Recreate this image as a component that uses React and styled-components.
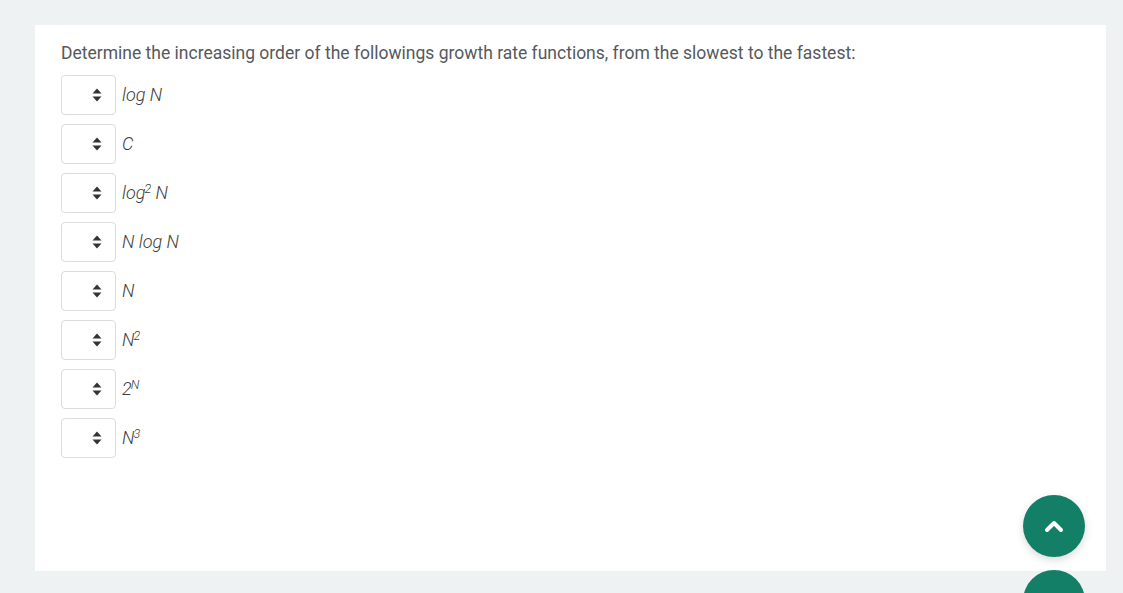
import React from 'react';
import styled, { createGlobalStyle } from 'styled-components';

const GlobalStyle = createGlobalStyle`
  body {
    margin: 0;
    background: #eef2f3;
    font-family: Roboto, "Liberation Sans", sans-serif;
    overflow: hidden;
  }
`;

const items = [
  { id: 1, label: <>log N</> },
  { id: 2, label: <>C</> },
  { id: 3, label: <>log<sup>2</sup> N</> },
  { id: 4, label: <>N log N</> },
  { id: 5, label: <>N</> },
  { id: 6, label: <>N<sup>2</sup></> },
  { id: 7, label: <>2<sup>N</sup></> },
  { id: 8, label: <>N<sup>3</sup></> },
];

const SortIcon = () => (
  <svg width="10" height="14" viewBox="0 0 10 14">
    <path d="M5 0.5 L9.5 5.5 H0.5 Z" fill="#333" />
    <path d="M5 13.5 L9.5 8.5 H0.5 Z" fill="#333" />
  </svg>
);

const App = () => {
  return (
    <Page>
      <GlobalStyle />
      <Card>
        <Question>
          Determine the increasing order of the followings growth rate functions, from the slowest to the fastest:
        </Question>
        <List>
          {items.map(({ id, label }) => (
            <Row key={id}>
              <SelectBox>
                <SortIcon />
              </SelectBox>
              <Label>{label}</Label>
            </Row>
          ))}
        </List>
      </Card>
      <TopButton>
        <svg width="20" height="14" viewBox="0 0 20 14">
          <path d="M3 11 L10 4 L17 11" fill="none" stroke="#fff" strokeWidth="4" strokeLinecap="round" strokeLinejoin="round" />
        </svg>
      </TopButton>
      <NextButton />
    </Page>
  );
};

const Page = styled.div`
  position: relative;
  height: 593px;
  padding: 25px 17px 0 35px;
  box-sizing: border-box;
  overflow: hidden;
`;

const Card = styled.div`
  background: #fff;
  height: 546px;
  padding: 16px 26px;
  box-sizing: border-box;
`;

const Question = styled.p`
  margin: 0 0 10px;
  font-size: 17.5px;
  line-height: 24px;
  color: #55595d;
`;

const List = styled.div`
  display: flex;
  flex-direction: column;
  gap: 9px;
`;

const Row = styled.div`
  display: flex;
  align-items: center;
  gap: 6px;
`;

const SelectBox = styled.div`
  width: 55px;
  height: 40px;
  box-sizing: border-box;
  border: 1px solid #dcdcdc;
  border-radius: 4px;
  display: flex;
  align-items: center;
  justify-content: flex-end;
  padding-right: 13px;
`;

const Label = styled.span`
  font-size: 18px;
  font-weight: 300;
  font-style: italic;
  color: #3a3d40;
  line-height: 40px;

  sup {
    font-size: 12.5px;
    line-height: 0;
    vertical-align: 6px;
    margin-left: -1px;
  }
`;

const TopButton = styled.div`
  position: absolute;
  left: 1023px;
  top: 495px;
  width: 62px;
  height: 62px;
  border-radius: 50%;
  background: #137f66;
  box-shadow: 0 3px 8px rgba(0, 0, 0, 0.15);
  display: flex;
  align-items: center;
  justify-content: center;
`;

const NextButton = styled.div`
  position: absolute;
  left: 1023px;
  top: 570px;
  width: 62px;
  height: 62px;
  border-radius: 50%;
  background: #137f66;
`;

export default App;
